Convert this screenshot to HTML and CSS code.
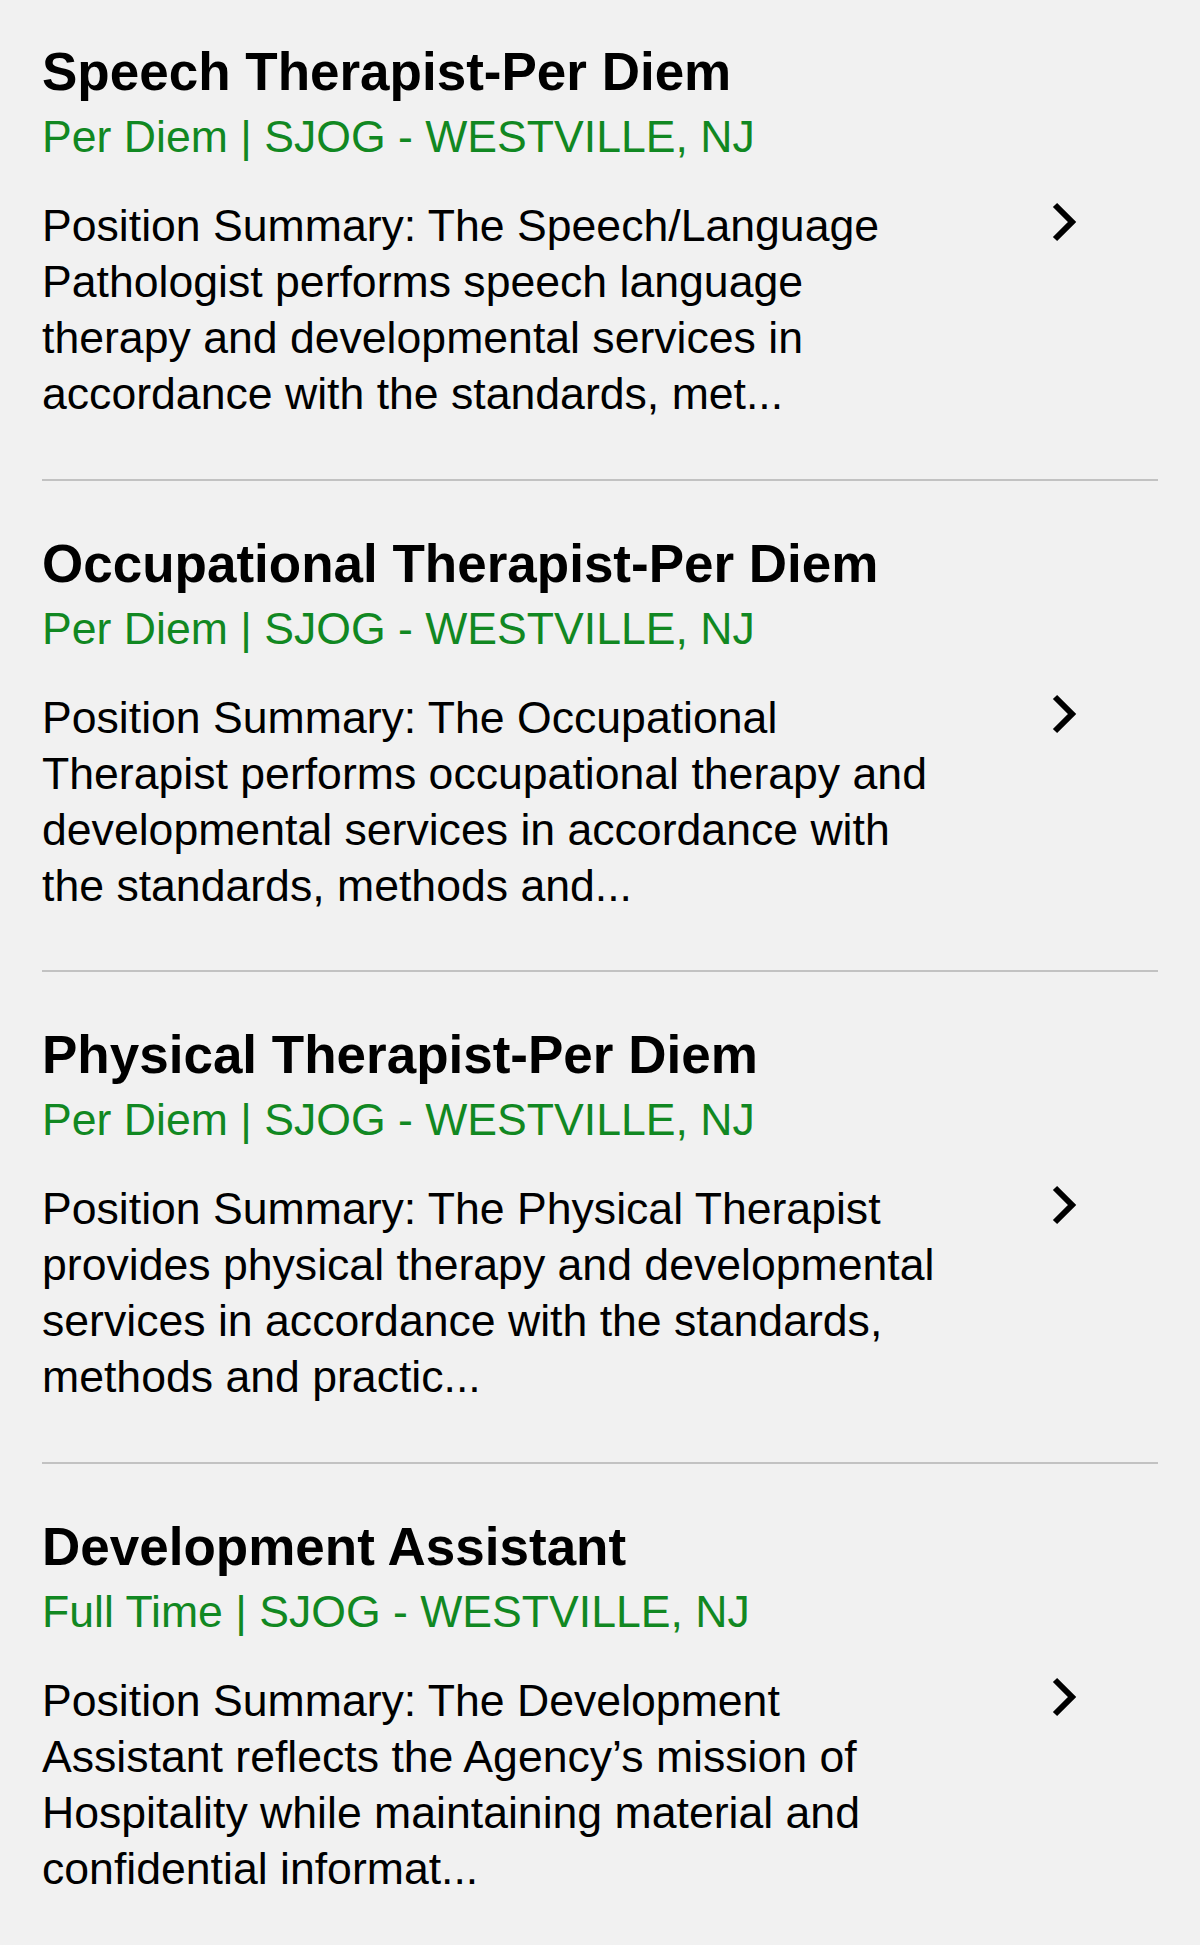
FILE: index.html
```html
<!DOCTYPE html>
<html lang="en">

<head>
	<meta charset="UTF-8">
	<meta name="viewport" content="width=device-width, initial-scale=1.0">
	<title>Jobs</title>
	<link rel="stylesheet" href="styles.css">
</head>

<body>
	<ul class="jobs">
		<li class="job">
			<a class="job-link" href="#">
				<h3 class="job-title">Speech Therapist-Per Diem</h3>
				<p class="job-meta">Per Diem | SJOG - WESTVILLE, NJ</p>
				<div class="job-row">
					<p class="job-summary">Position Summary: The Speech/Language Pathologist performs speech language therapy and developmental services in accordance with the standards, met...</p>
					<svg class="chevron" width="28" height="44" viewBox="0 0 28 44"><polyline points="5,5 22,22 5,39" /></svg>
				</div>
			</a>
		</li>
		<li class="job">
			<a class="job-link" href="#">
				<h3 class="job-title">Occupational Therapist-Per Diem</h3>
				<p class="job-meta">Per Diem | SJOG - WESTVILLE, NJ</p>
				<div class="job-row">
					<p class="job-summary">Position Summary: The Occupational Therapist performs occupational therapy and developmental services in accordance with the standards, methods and...</p>
					<svg class="chevron" width="28" height="44" viewBox="0 0 28 44"><polyline points="5,5 22,22 5,39" /></svg>
				</div>
			</a>
		</li>
		<li class="job">
			<a class="job-link" href="#">
				<h3 class="job-title">Physical Therapist-Per Diem</h3>
				<p class="job-meta">Per Diem | SJOG - WESTVILLE, NJ</p>
				<div class="job-row">
					<p class="job-summary">Position Summary: The Physical Therapist provides physical therapy and developmental services in accordance with the standards, methods and practic...</p>
					<svg class="chevron" width="28" height="44" viewBox="0 0 28 44"><polyline points="5,5 22,22 5,39" /></svg>
				</div>
			</a>
		</li>
		<li class="job">
			<a class="job-link" href="#">
				<h3 class="job-title">Development Assistant</h3>
				<p class="job-meta">Full Time | SJOG - WESTVILLE, NJ</p>
				<div class="job-row">
					<p class="job-summary">Position Summary: The Development Assistant reflects the Agency’s mission of Hospitality while maintaining material and confidential informat...</p>
					<svg class="chevron" width="28" height="44" viewBox="0 0 28 44"><polyline points="5,5 22,22 5,39" /></svg>
				</div>
			</a>
		</li>
	</ul>
</body>

</html>
```

FILE: styles.css
```css
body {
	margin: 0;
	background: #f1f1f1;
	color: #000;
	font-family: "Liberation Sans", Arial, Helvetica, sans-serif;
}

.jobs {
	list-style: none;
	margin: 0;
	padding: 0 42px;
}

.job {
	padding: 51px 0 56.5px;
	border-bottom: 2px solid #c2c2c2;
}

.job:first-child {
	padding-top: 40px;
}

.job-link {
	display: block;
	color: inherit;
	text-decoration: none;
}

.job-title {
	margin: 0;
	font-size: 53px;
	line-height: 64px;
	font-weight: bold;
}

.job-meta {
	margin: 5px 0 0;
	font-size: 44.6px;
	line-height: 56px;
	color: #118822;
}

.job-row {
	display: flex;
	align-items: flex-start;
	margin-top: 33px;
}

.job-summary {
	width: 910px;
	margin: 0;
	font-size: 44.6px;
	line-height: 56px;
}

.chevron {
	flex: none;
	margin: 2px 0 0 98px;
}

.chevron polyline {
	fill: none;
	stroke: #000;
	stroke-width: 6;
}
```
